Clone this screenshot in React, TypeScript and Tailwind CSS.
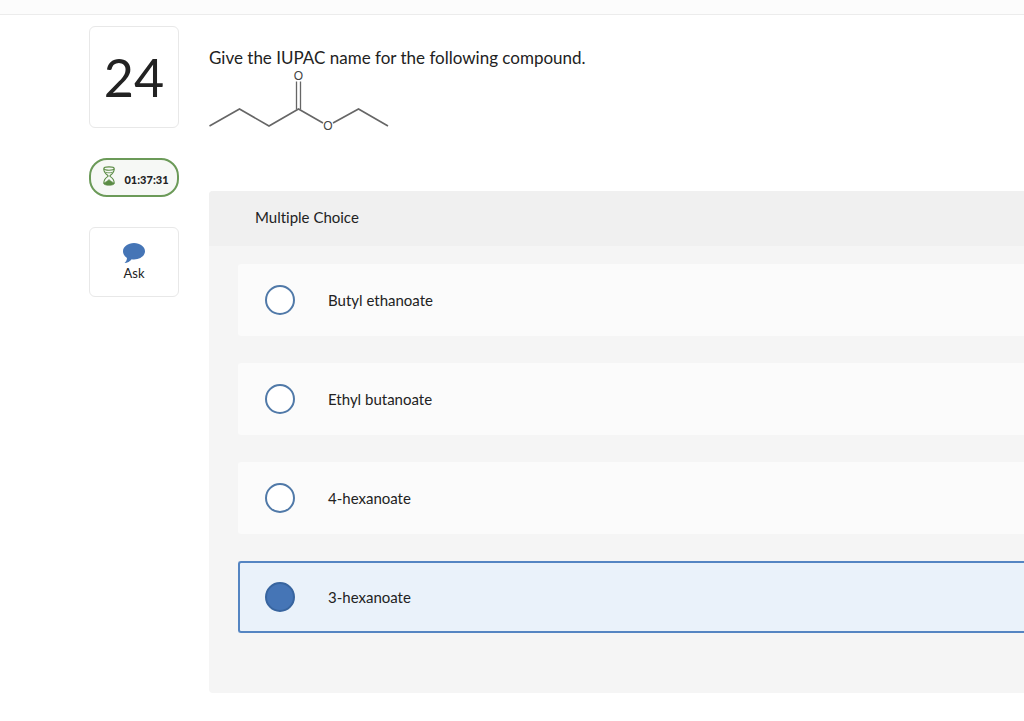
import { useState } from "react";

const choices = [
  { id: "a", label: "Butyl ethanoate" },
  { id: "b", label: "Ethyl butanoate" },
  { id: "c", label: "4-hexanoate" },
  { id: "d", label: "3-hexanoate" },
];

function HourglassIcon() {
  return (
    <svg width="14" height="20" viewBox="0 0 14 20" fill="none" stroke="#5b8c45" aria-hidden="true">
      <ellipse cx="7" cy="2.6" rx="5.2" ry="1.7" strokeWidth="1.1" />
      <path d="M1.8 2.8C1.8 6.4 3.4 7.8 5.6 9.2C6.2 9.6 6.2 10.2 5.6 10.6C3.4 12 1.8 13.4 1.8 17.2" strokeWidth="1.1" />
      <path d="M12.2 2.8C12.2 6.4 10.6 7.8 8.4 9.2C7.8 9.6 7.8 10.2 8.4 10.6C10.6 12 12.2 13.4 12.2 17.2" strokeWidth="1.1" />
      <path d="M3.4 6.2C5.4 7 8.6 7 10.6 6.2" strokeWidth="0.8" />
      <path d="M1.6 17.2C3.6 15.8 5.6 15.4 7 13.4C8.4 15.4 10.4 15.8 12.4 17.2C12.4 20 1.6 20 1.6 17.2Z" fill="#5b8c45" strokeWidth="0.6" />
    </svg>
  );
}

function ChatIcon() {
  return (
    <svg width="22" height="20" viewBox="0 0 22 20" fill="#4575b6" aria-hidden="true">
      <path d="M11 0C17.1 0 22 3.7 22 8.2C22 12.7 17.1 16.4 11 16.4C10.2 16.4 9.4 16.3 8.7 16.2C6.9 18.6 4.5 19.8 1.5 20C2.9 18.8 3.9 17 4 14.9C1.5 13.3 0 10.9 0 8.2C0 3.7 4.9 0 11 0Z" />
    </svg>
  );
}

function Molecule() {
  return (
    <svg width="180" height="65" viewBox="0 0 180 65" className="overflow-visible" fill="none" stroke="#666" strokeWidth="1.6" role="img" aria-label="Skeletal structure of the compound">
      <path d="M0.5 56L30.5 39L60 56L89.5 39L114 53" />
      <path d="M124 53L149.5 39L179 56" />
      <path d="M87.5 11.5V39.5M91.5 11.5V39.5" strokeWidth="1.3" />
      <g fill="#444" stroke="none" fontSize="12" textAnchor="middle" fontFamily="'Liberation Sans', sans-serif">
        <text x="89.5" y="10">O</text>
        <text x="119" y="60">O</text>
      </g>
    </svg>
  );
}

export default function App() {
  const [selected, setSelected] = useState("d");

  return (
    <div className="min-h-screen overflow-x-hidden bg-white font-['Lato',sans-serif] text-[#222] [font-variant-ligatures:none]">
      <header className="h-[15px] border-b border-[#ececec] bg-[#fcfcfc]" />

      <div className="flex items-start gap-[30px] pt-[11px] pl-[89px]">
        <aside className="flex w-[90px] shrink-0 flex-col gap-[30px]">
          <div className="flex h-[102px] items-center justify-center rounded-md border border-[#e8e8e8] text-[52px]">
            24
          </div>

          <div className="flex h-[39px] items-start justify-center gap-2 rounded-[18px] border-2 border-[#6b9a58] bg-[#f6f8f5] pt-[6px] pl-[3px]">
            <HourglassIcon />
            <span className="pt-1 text-[11px] leading-5 font-black">01:37:31</span>
          </div>

          <button type="button" className="flex h-[70px] cursor-pointer flex-col items-center rounded-md border border-[#e8e8e8] pt-[15px]">
            <ChatIcon />
            <span className="text-[13px] leading-5">Ask</span>
          </button>
        </aside>

        <main className="min-w-0 flex-1 pt-5">
          <h1 className="text-[17px] leading-6">Give the IUPAC name for the following compound.</h1>
          <Molecule />

          <fieldset className="mt-14 rounded-l-sm bg-[#f5f5f5] pb-[60px]">
            <legend className="float-left flex h-[55px] w-full items-center rounded-tl-sm bg-[#f0f0f0] pb-[2px] pl-[46px] text-[15px]">
              Multiple Choice
            </legend>
            <div className="clear-both flex flex-col gap-[27px] pt-[18px] pl-[29px]">
              {choices.map((choice) => (
                <label
                  key={choice.id}
                  className="flex h-[72px] cursor-pointer items-center gap-[33px] rounded-l-[3px] border-2 border-r-0 border-transparent bg-[#fbfbfb] pl-[25px] text-[15px] has-checked:border-[#5585c2] has-checked:bg-[#eaf2fa]"
                >
                  <input
                    type="radio"
                    name="answer"
                    value={choice.id}
                    checked={selected === choice.id}
                    onChange={() => setSelected(choice.id)}
                    className="size-[30px] shrink-0 cursor-pointer appearance-none rounded-full border-2 border-[#5079a8] bg-white checked:border-[#38659f] checked:bg-[#4575b6]"
                  />
                  <span>{choice.label}</span>
                </label>
              ))}
            </div>
          </fieldset>
        </main>
      </div>
    </div>
  );
}
